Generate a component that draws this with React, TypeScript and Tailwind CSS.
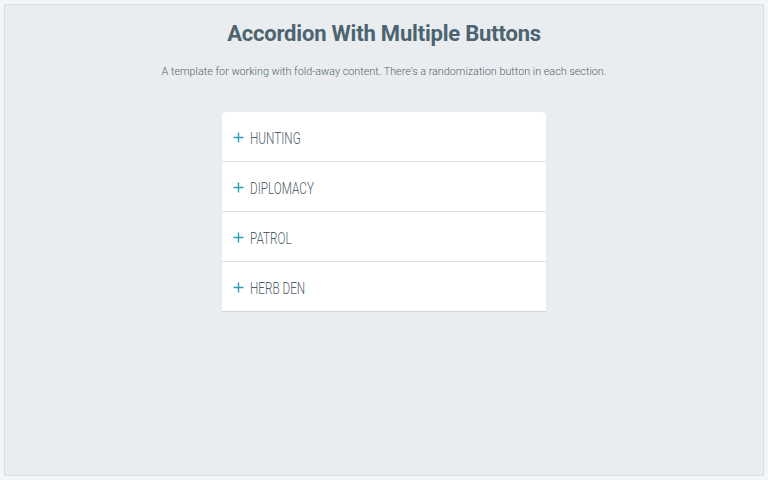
import React from "react";

const items = ["HUNTING", "DIPLOMACY", "PATROL", "HERB DEN"];

export default function App() {
  return (
    <div className="w-[768px] h-[480px] bg-[#f4f5f6] p-[4px]">
      <div className="h-full border border-[#dcdfe2] bg-[#e9edf0] flex flex-col items-center" style={{ fontFamily: "Roboto, sans-serif" }}>
        <h1 className="mt-[14px] text-[22px] leading-[30px] font-bold text-[#4d6470] tracking-[-0.2px]">
          Accordion With Multiple Buttons
        </h1>
        <p className="mt-[16px] text-[10.8px] leading-[14px] font-light text-[#56646e]">
          A template for working with fold-away content. There's a randomization button in each section.
        </p>
        <div className="mt-[33px] w-[324px] bg-white rounded-t-[4px] shadow-[0_1px_1px_rgba(0,0,0,0.12)]">
          {items.map((t, i) => (
            <div
              key={t}
              className={`flex items-center pl-[11px] pt-[5px] ${i < items.length - 1 ? "h-[50px] border-b border-[#dde1e4]" : "h-[49px]"}`}
            >
              <svg width="11" height="11" viewBox="0 0 11 11" className="mr-[6px] mt-[-3px] shrink-0">
                <path d="M5.5 0.5V10.5M0.5 5.5H10.5" stroke="#2a9fb5" strokeWidth="1.4" />
              </svg>
              <span
                className="inline-block origin-left scale-x-[0.69] text-[17px] font-light text-[#4f5e6a] whitespace-nowrap"
                style={{ fontFamily: "Roboto, sans-serif" }}
              >
                {t}
              </span>
            </div>
          ))}
        </div>
      </div>
    </div>
  );
}
